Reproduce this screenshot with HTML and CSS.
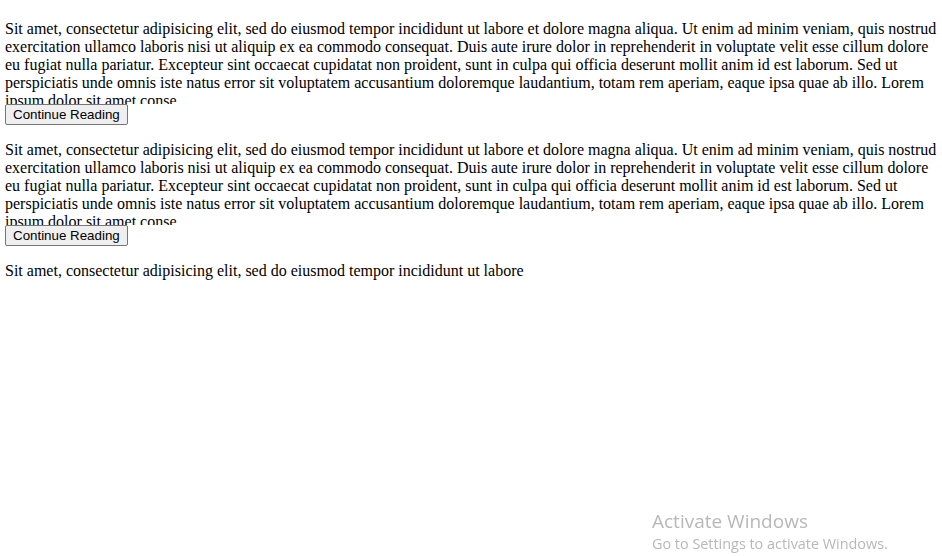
FILE: index.html
```html
<!DOCTYPE html>
<html>
<head>
<meta charset="utf-8">
<link rel="stylesheet" href="styles.css">
</head>
<body>
<div class="post">
  <p class="excerpt">Sit amet, consectetur adipisicing elit, sed do eiusmod tempor incididunt ut labore et dolore magna aliqua. Ut enim ad minim veniam, quis nostrud exercitation ullamco laboris nisi ut aliquip ex ea commodo consequat. Duis aute irure dolor in reprehenderit in voluptate velit esse cillum dolore eu fugiat nulla pariatur. Excepteur sint occaecat cupidatat non proident, sunt in culpa qui officia deserunt mollit anim id est laborum. Sed ut perspiciatis unde omnis iste natus error sit voluptatem accusantium doloremque laudantium, totam rem aperiam, eaque ipsa quae ab illo. Lorem ipsum dolor sit amet conse</p>
  <button class="more">Continue Reading</button>
</div>
<div class="post">
  <p class="excerpt">Sit amet, consectetur adipisicing elit, sed do eiusmod tempor incididunt ut labore et dolore magna aliqua. Ut enim ad minim veniam, quis nostrud exercitation ullamco laboris nisi ut aliquip ex ea commodo consequat. Duis aute irure dolor in reprehenderit in voluptate velit esse cillum dolore eu fugiat nulla pariatur. Excepteur sint occaecat cupidatat non proident, sunt in culpa qui officia deserunt mollit anim id est laborum. Sed ut perspiciatis unde omnis iste natus error sit voluptatem accusantium doloremque laudantium, totam rem aperiam, eaque ipsa quae ab illo. Lorem ipsum dolor sit amet conse</p>
  <button class="more">Continue Reading</button>
</div>
<div class="post">
  <p class="excerpt">Sit amet, consectetur adipisicing elit, sed do eiusmod tempor incididunt ut labore</p>
</div>
<div class="watermark">
  <div class="wm-title">Activate Windows</div>
  <div class="wm-sub">Go to Settings to activate Windows.</div>
</div>
</body>
</html>
```
FILE: styles.css
```css
html, body {
  margin: 0;
  padding: 0;
  background: #fff;
}
body {
  padding: 4px 5px;
  font-family: "Liberation Serif", "Times New Roman", serif;
  font-size: 16px;
  line-height: 18px;
  color: #000;
}
.excerpt {
  margin: 16px 0 0 0;
  max-height: 84px;
  overflow: hidden;
}
.more {
  display: block;
  font-family: "Liberation Sans", Arial, sans-serif;
  font-size: 13.33px;
  line-height: 15px;
  padding: 2px 7px;
  margin: 0;
  border: 1px solid #767676;
  border-radius: 2px;
  background: #efefef;
  color: #000;
}
.watermark {
  position: fixed;
  left: 652px;
  top: 508px;
  color: #b8b8b8;
  font-family: "Open Sans", "Noto Sans", sans-serif;
}
.wm-title {
  font-size: 19px;
  line-height: 26px;
}
.wm-sub {
  font-size: 14.4px;
  line-height: 20px;
}
```
